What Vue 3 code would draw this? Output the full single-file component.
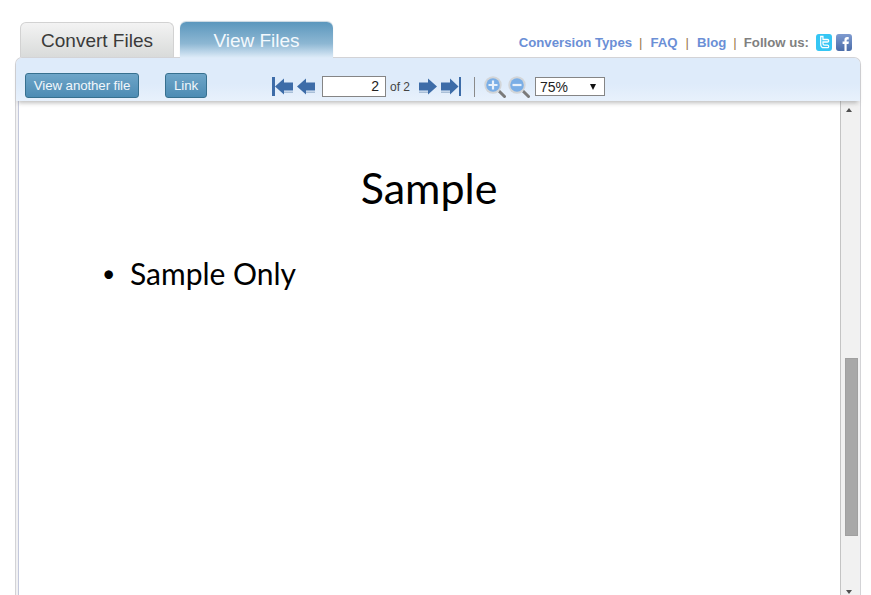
<template>
  <div class="page">
    <div class="top">
      <div class="tabs">
        <div class="tab grey">Convert Files</div>
        <div class="tab blue">View Files</div>
      </div>
      <div class="links">
        <a>Conversion Types</a>
        <span class="sep">|</span>
        <a class="nudge">FAQ</a>
        <span class="sep nudge">|</span>
        <a class="nudge">Blog</a>
        <span class="sep">|</span>
        <span class="follow">Follow us:</span>
        <svg class="social tw" width="16" height="17" viewBox="0 0 17 17" preserveAspectRatio="none">
          <rect width="17" height="17" rx="3" fill="#35c6f4" />
          <path d="M5 2.500h2.400v3h4.600q1.500 0 1.500 1.300t-1.500 1.200H7.400v1.600q0 1.600 1.600 1.600h3q1.500 0 1.500 1.300t-1.500 1.200H8.500Q5 13.700 5 10.200z" fill="none" stroke="#fff" stroke-width="1.300" />
        </svg>
        <svg class="social" width="16" height="17" viewBox="0 0 17 17" preserveAspectRatio="none">
          <defs>
            <linearGradient id="fb" x1="0" y1="0" x2="0" y2="1">
              <stop offset="0" stop-color="#7f9bd0" />
              <stop offset="1" stop-color="#4a6ca8" />
            </linearGradient>
          </defs>
          <rect width="17" height="17" rx="3" fill="url(#fb)" />
          <path d="M9 17V10H7V7.500h2V5.800Q9 3 11.800 3H13.500v2.400h-1.200q-1 0-1 1V7.500h2.400l-.4 2.500h-2V17z" fill="#fff" />
        </svg>
      </div>
    </div>

    <div class="panel">
      <div class="toolbar">
        <button class="btn first">View another file</button>
        <button class="btn second">Link</button>
        <div class="pager">
          <svg width="21" height="20" viewBox="0 0 21 20">
            <rect x="0" y="0" width="3" height="19" fill="#3d6ca8" />
            <path d="M3 9.500 12 1.500V5.500H21V13.500H12V17.500Z" fill="#3d6ca8" />
            <path d="M12 14.500H21V16H12Z" fill="#a9bfd8" />
          </svg>
          <svg class="prev" width="18" height="20" viewBox="0 0 18 20">
            <path d="M0 9.500 9 1.500V5.500H18V13.500H9V17.500Z" fill="#3d6ca8" />
            <path d="M9 14.500H18V16H9Z" fill="#a9bfd8" />
          </svg>
          <div class="page-input">2</div>
          <span class="of">of 2</span>
          <svg class="next" width="18" height="20" viewBox="0 0 18 20">
            <path d="M18 9.500 9 1.500V5.500H0V13.500H9V17.500Z" fill="#3d6ca8" />
            <path d="M0 14.500H9V16H0Z" fill="#a9bfd8" />
          </svg>
          <svg class="last" width="20" height="20" viewBox="0 0 20 20">
            <path d="M17.500 9.500 9 1.500V5.500H0V13.500H9V17.500Z" fill="#3d6ca8" />
            <path d="M0 14.500H9V16H0Z" fill="#a9bfd8" />
            <rect x="18" y="0" width="2.500" height="19" fill="#3d6ca8" />
          </svg>
          <div class="divider"></div>
          <svg class="zoom-in" width="22" height="22" viewBox="0 0 22 22">
            <path d="M14.500 14.500 20.500 20.500" stroke="#7a7a7a" stroke-width="3" stroke-linecap="round" />
            <circle cx="9" cy="9" r="8.700" fill="#d2d5d8" />
            <circle cx="9" cy="9" r="6.800" fill="#7aaee6" />
            <path d="M4.500 9h9M9 4.500v9" stroke="#e8f1fb" stroke-width="2.200" />
          </svg>
          <svg class="zoom-out" width="22" height="22" viewBox="0 0 22 22">
            <path d="M14.500 14.500 20.500 20.500" stroke="#7a7a7a" stroke-width="3" stroke-linecap="round" />
            <circle cx="9" cy="9" r="8.700" fill="#d2d5d8" />
            <circle cx="9" cy="9" r="6.800" fill="#7aaee6" />
            <path d="M4.500 9h9" stroke="#e8f1fb" stroke-width="2.200" />
          </svg>
          <div class="zoom-select">
            <span>75%</span>
            <i class="caret"></i>
          </div>
        </div>
      </div>

      <div class="body">
        <div class="doc">
          <div class="slide-title">Sample</div>
          <div class="bullet">
            <span class="dot">•</span>
            <span>Sample Only</span>
          </div>
        </div>
        <div class="scrollbar">
          <i class="arrow up"></i>
          <div class="track">
            <div class="thumb"></div>
          </div>
          <i class="arrow down"></i>
        </div>
      </div>
    </div>
  </div>
</template>

<script setup>
</script>

<style>
html,
body {
  margin: 0;
  background: #fff;
  overflow: hidden;
}
</style>

<style scoped>
.page {
  width: 871px;
  height: 595px;
  overflow: hidden;
  font-family: "Liberation Sans", Arial, sans-serif;
  box-sizing: border-box;
  padding: 22px 10px 0 15px;
}

.top {
  display: flex;
  justify-content: space-between;
  align-items: flex-start;
  height: 36px;
  position: relative;
  z-index: 2;
}

.tabs {
  display: flex;
  gap: 6px;
  padding-left: 5px;
}

.tab {
  box-sizing: border-box;
  height: 36px;
  border-radius: 6px 6px 0 0;
  text-align: center;
  font-size: 19px;
  line-height: 36px;
}

.tab.grey {
  width: 154px;
  height: 35px;
  background: linear-gradient(#f3f3f3, #d9dbda);
  border: 1px solid #d2d2d2;
  border-bottom: 0;
  color: #3a3a3a;
}

.tab.blue {
  width: 153px;
  line-height: 37px;
  background: linear-gradient(#5b97bd 0%, #8db7d3 60%, #dfecf9 100%);
  box-shadow: 0 -1px 1px #c8d6e0;
  color: #f4f9fd;
}

.links {
  display: flex;
  align-items: center;
  gap: 7px;
  height: 17px;
  margin-top: 12px;
  padding-right: 9px;
  font-size: 13.200px;
  font-weight: 700;
}

.links a {
  color: #6b8fd6;
}

.links .nudge {
  margin-left: 1px;
}

.sep {
  color: #9a7a4c;
  font-weight: 400;
}

.follow {
  color: #808080;
}

.social {
  display: block;
}

.social + .social {
  margin-left: -3px;
}

.panel {
  box-sizing: border-box;
  width: 846px;
  height: 538px;
  margin-top: -1px;
  border: 1px solid #d3d3d6;
  border-bottom: 0;
  border-radius: 7px 7px 0 0;
  background: #f1f1f3;
  padding: 0 1px 0 2px;
  position: relative;
}

.toolbar {
  display: flex;
  align-items: center;
  height: 43px;
  margin: 0 -1px 0 -2px;
  padding: 12px 9px 0;
  box-sizing: border-box;
  border-radius: 6px 6px 0 0;
  background: linear-gradient(#deebfa 60%, #e8f1fc);
  box-shadow: 0 4px 4px -2px rgba(110, 110, 110, 0.45);
  position: relative;
  z-index: 1;
}

.btn {
  box-sizing: border-box;
  height: 25px;
  padding: 0;
  border: 1px solid #37708f;
  border-radius: 3px;
  background: linear-gradient(#6ea5c8, #4d8cb4);
  color: #f2f7fb;
  font-family: inherit;
  font-size: 13.300px;
  letter-spacing: -0.1px;
}

.btn.first {
  width: 114px;
}

.btn.second {
  width: 42px;
  margin-left: 26px;
}

.pager {
  display: flex;
  align-items: center;
  margin-left: 65px;
  padding-top: 2px;
  font-size: 12px;
  color: #444;
}

.prev {
  margin-left: 4px;
}

.page-input {
  box-sizing: border-box;
  width: 64px;
  height: 21px;
  margin-left: 7px;
  padding-right: 6px;
  border: 1px solid #858585;
  background: #fff;
  text-align: right;
  font-size: 14px;
  line-height: 19px;
  color: #222;
}

.of {
  margin-left: 4px;
  width: 25px;
}

.next {
  margin-left: 4px;
}

.last {
  margin-left: 4px;
}

.divider {
  width: 1px;
  height: 20px;
  margin-left: 13px;
  background: #8a8a8a;
}

.zoom-in {
  margin-left: 9px;
}

.zoom-out {
  margin-left: 2px;
}

.zoom-select {
  box-sizing: border-box;
  display: flex;
  align-items: center;
  justify-content: space-between;
  width: 70px;
  height: 19px;
  margin-left: 5px;
  padding: 0 8px 0 4px;
  border: 1px solid #858585;
  background: #fff;
  font-size: 14px;
  color: #222;
}

.caret {
  width: 0;
  height: 0;
  border-left: 3.500px solid transparent;
  border-right: 3.500px solid transparent;
  border-top: 6px solid #111;
}

.body {
  display: flex;
  height: 494px;
  border-left: 1px solid #c3c8dc;
}

.doc {
  flex: 1;
  background: #fff;
  border-right: 1px solid #c4c4c4;
}

.slide-title {
  margin-top: 60px;
  text-align: center;
  font-family: Lato, "Open Sans", sans-serif;
  font-size: 43px;
  line-height: 54px;
  color: #000;
  padding-right: 1px;
}

.bullet {
  display: flex;
  margin-top: 38px;
  padding-left: 83px;
  font-family: Lato, "Open Sans", sans-serif;
  font-size: 30px;
  line-height: 40px;
  color: #000;
}

.dot {
  width: 28px;
  font-size: 23px;
}

.scrollbar {
  position: relative;
  width: 18px;
  flex: none;
  background: #f1f1f1;
  box-sizing: border-box;
}

.arrow {
  position: absolute;
  left: 5px;
  width: 0;
  height: 0;
  border-left: 3.500px solid transparent;
  border-right: 3.500px solid transparent;
}

.arrow.up {
  top: 7px;
  border-bottom: 4px solid #505050;
}

.arrow.down {
  bottom: 1px;
  border-top: 4px solid #505050;
}

.thumb {
  position: absolute;
  top: 257px;
  left: 4px;
  box-sizing: border-box;
  width: 13px;
  height: 178px;
  background: #a8a8a8;
  border: 1px solid #a0a0a0;
}
</style>
